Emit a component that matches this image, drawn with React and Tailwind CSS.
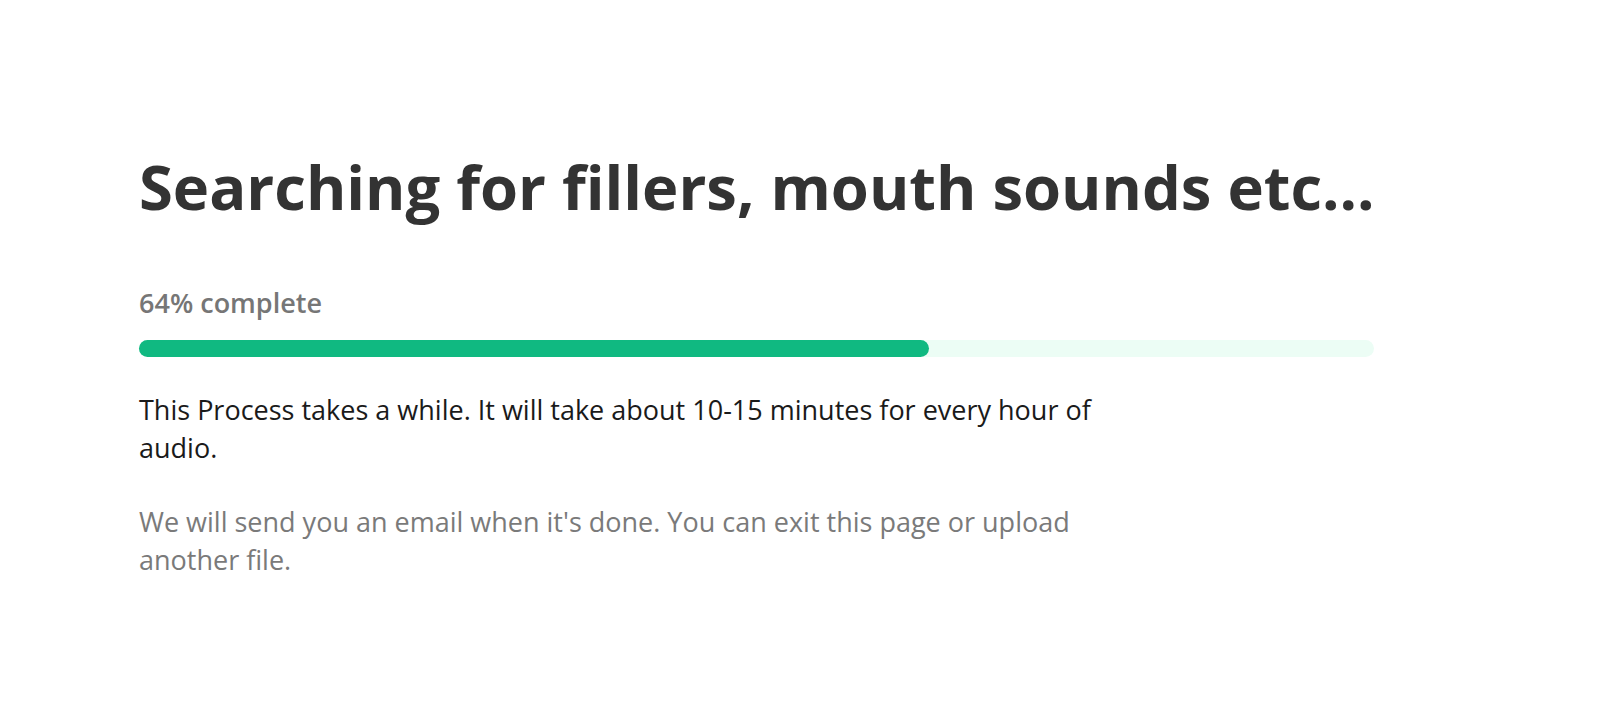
export default function App() {
    const progress = 64;
    return (
        <div className="min-h-screen bg-white" style={{ fontFamily: '"Open Sans", "Noto Sans", sans-serif' }}>
            <div className="pl-[139px] pt-[156px] w-[1374px]">
                <h1 className="text-[61.5px] font-bold leading-none text-[#333333] whitespace-nowrap">Searching for fillers, mouth sounds etc...</h1>
                <p className="mt-[71px] text-[27px] font-semibold leading-none text-[#767676]">{progress}% complete</p>
                <div className="mt-[24px] h-[17px] w-full rounded-full bg-[#ecfdf5]">
                    <div className="h-full rounded-full bg-[#10b981]" style={{ width: `${progress}%` }} />
                </div>
                <p className="mt-[34px] max-w-[1000px] text-[27px] leading-[38px] text-[#1a1a1a]">This Process takes a while. It will take about 10-15 minutes for every hour of audio.</p>
                <p className="mt-[36px] max-w-[1000px] text-[27px] leading-[38px] text-[#7a7a7a]">We will send you an email when it's done. You can exit this page or upload another file.</p>
            </div>
        </div>
    );
}
